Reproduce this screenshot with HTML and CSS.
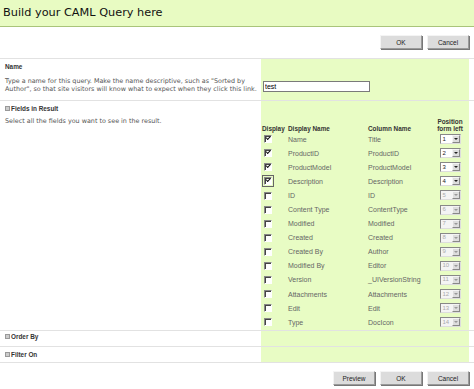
FILE: index.html
```html
<!DOCTYPE html>
<html lang="en">
<head>
    <meta charset="UTF-8">
    <title>Build your CAML Query here</title>
    <link rel="stylesheet" href="styles.css">
</head>
<body>
    <!-- Header -->
    <div class="header">Build your CAML Query here</div>

    <div class="toolbar">
        <button class="btn">OK</button>
        <button class="btn">Cancel</button>
    </div>

    <div class="sections">
        <!-- Name -->
        <div class="section">
            <div class="sec-left">
                <div class="sec-title">Name</div>
                <div class="sec-desc">Type a name for this query. Make the name descriptive, such as "Sorted by Author", so that site visitors will know what to expect when they click this link.</div>
            </div>
            <div class="sec-right name-right">
                <input class="txt" type="text" value="test">
            </div>
        </div>

        <!-- Fields -->
        <div class="section">
            <div class="sec-left">
                <div class="sec-title"><span class="exp"></span>Fields in Result</div>
                <div class="sec-desc sec-desc-sm">Select all the fields you want to see in the result.</div>
            </div>
            <div class="sec-right">
                <div class="fields">
                    <div class="frow fhead">
                        <div class="c-disp">Display</div>
                        <div class="c-name">Display Name</div>
                        <div class="c-col">Column Name</div>
                        <div class="c-pos">Position form left</div>
                    </div>
                    <div id="rows"></div>
                </div>
            </div>
        </div>

        <div class="section short">
            <div class="sec-left"><div class="sec-title"><span class="exp"></span>Order By</div></div>
            <div class="sec-right"></div>
        </div>
        <div class="section short">
            <div class="sec-left mid"><div class="sec-title"><span class="exp"></span>Filter On</div></div>
            <div class="sec-right"></div>
        </div>
    </div>

    <div class="toolbar bottom">
        <button class="btn">Preview</button>
        <button class="btn">OK</button>
        <button class="btn">Cancel</button>
    </div>

    <script>
        // Campos de la lista
        const fields = [
            ['Name', 'Title', true],
            ['ProductID', 'ProductID', true],
            ['ProductModel', 'ProductModel', true],
            ['Description', 'Description', true],
            ['ID', 'ID', false],
            ['Content Type', 'ContentType', false],
            ['Modified', 'Modified', false],
            ['Created', 'Created', false],
            ['Created By', 'Author', false],
            ['Modified By', 'Editor', false],
            ['Version', '_UIVersionString', false],
            ['Attachments', 'Attachments', false],
            ['Edit', 'Edit', false],
            ['Type', 'DocIcon', false]
        ];

        document.getElementById('rows').innerHTML = fields.map((f, i) => `
            <div class="frow">
                <div class="c-disp"><span class="chk ${f[2] ? 'checked' : ''} ${i === 3 ? 'focus' : ''}"></span></div>
                <div class="c-name">${f[0]}</div>
                <div class="c-col">${f[1]}</div>
                <div class="c-pos"><span class="sel ${f[2] ? '' : 'disabled'}"><span class="num">${i + 1}</span><span class="arr"></span></span></div>
            </div>
        `).join('');
    </script>
</body>
</html>
```

FILE: styles.css
```css
* {
    margin: 0;
    padding: 0;
    box-sizing: border-box;
}

body {
    font-family: "DejaVu Sans", Verdana, sans-serif;
    background: white;
    color: #333;
    width: 474px;
    height: 389px;
    overflow: hidden;
}

.header {
    height: 27px;
    background: #e8fbc2;
    border-bottom: 1px solid #a9c47a;
    font-size: 11.3px;
    line-height: 25px;
    padding-left: 3px;
    color: #111;
}

.toolbar {
    display: flex;
    justify-content: flex-end;
    gap: 5px;
    padding: 8px 5px 0 0;
    height: 31px;
}

.toolbar.bottom {
    padding-top: 8px;
    height: 25px;
}

.btn {
    width: 42px;
    height: 14px;
    background: #dcdcdc;
    border: 1px solid #9a9a9a;
    border-top-color: #f4f4f4;
    border-left-color: #f4f4f4;
    font-family: "Liberation Sans", Arial, sans-serif;
    font-size: 6.5px;
    color: #222;
    box-shadow: 1px 1px 0 #777;
}

.sections {
    border-top: 1px solid #e2e2e2;
}

.section {
    display: flex;
    border-bottom: 1px solid #e2e2e2;
}

.sec-left {
    width: 261px;
    padding: 3px 4px 0 5px;
}

.sec-right {
    flex: 1;
    background: #e8fcc4;
    margin-right: 5px;
}

.section.short {
    height: 16px;
}

.section.short .sec-left {
    padding-top: 1px;
}

.section.short .sec-left.mid {
    padding-top: 3px;
}

.sec-title {
    font-family: "Liberation Sans", Arial, sans-serif;
    font-size: 6.4px;
    font-weight: bold;
    color: #333;
    line-height: 9px;
    display: flex;
    align-items: center;
}

.exp {
    display: inline-block;
    width: 5px;
    height: 5px;
    border: 1px solid #999;
    background: #ccc;
    margin-right: 1px;
}

.sec-desc {
    font-size: 6.4px;
    line-height: 8px;
    color: #555;
    margin-top: 6px;
    padding-bottom: 7px;
}

.sec-desc-sm {
    margin-top: 4px;
}

.name-right {
    padding: 15px 0 0 2px;
    height: 41px;
}

.txt {
    width: 107px;
    height: 11px;
    border: 1px solid #7a7a7a;
    background: white;
    font-family: "Liberation Sans", Arial, sans-serif;
    font-size: 7px;
    padding-left: 1px;
    outline: none;
}

.fields {
    padding: 14px 0 1px 1px;
}

.frow {
    display: flex;
    align-items: center;
    height: 14.1px;
    font-family: "Liberation Sans", Arial, sans-serif;
    font-size: 7px;
    color: #666;
}

.fhead {
    align-items: flex-end;
    height: 17px;
    font-size: 6.4px;
    font-weight: bold;
    color: #333;
}

.c-disp {
    width: 26px;
    padding-left: 2px;
}

.c-name {
    width: 80px;
}

.c-col {
    width: 67px;
}

.c-pos {
    width: 30px;
    text-align: center;
    line-height: 7px;
}

.fhead .c-disp {
    padding-left: 0;
}

.chk {
    display: inline-block;
    width: 8px;
    height: 8px;
    background: white;
    border: 1px solid #fff;
    border-top-color: #888;
    border-left-color: #888;
    box-shadow: inset 1px 1px 0 #444;
    position: relative;
    vertical-align: middle;
}

.chk.checked::after {
    content: "";
    position: absolute;
    left: 1px;
    top: 0px;
    width: 3px;
    height: 2px;
    border-left: 1.5px solid #111;
    border-bottom: 1.5px solid #111;
    transform: rotate(-45deg);
}

.chk.focus {
    outline: 1px solid #666;
    outline-offset: 1px;
}

.sel {
    display: inline-flex;
    align-items: center;
    width: 21px;
    height: 10px;
    background: white;
    border: 1px solid #888;
    border-right-color: #ddd;
    border-bottom-color: #ddd;
    font-size: 6px;
    color: #222;
    vertical-align: middle;
}

.sel .num {
    flex: 1;
    text-align: left;
    padding-left: 2px;
}

.sel .arr {
    width: 8px;
    height: 8px;
    background: #ddd;
    border: 1px solid #f4f4f4;
    border-right-color: #888;
    border-bottom-color: #888;
    position: relative;
}

.sel .arr::after {
    content: "";
    position: absolute;
    left: 1.5px;
    top: 2px;
    border-left: 2px solid transparent;
    border-right: 2px solid transparent;
    border-top: 2px solid #222;
}

.sel.disabled {
    color: #aaa;
    background: #f4f4f4;
}

.sel.disabled .arr::after {
    border-top-color: #999;
}
```
